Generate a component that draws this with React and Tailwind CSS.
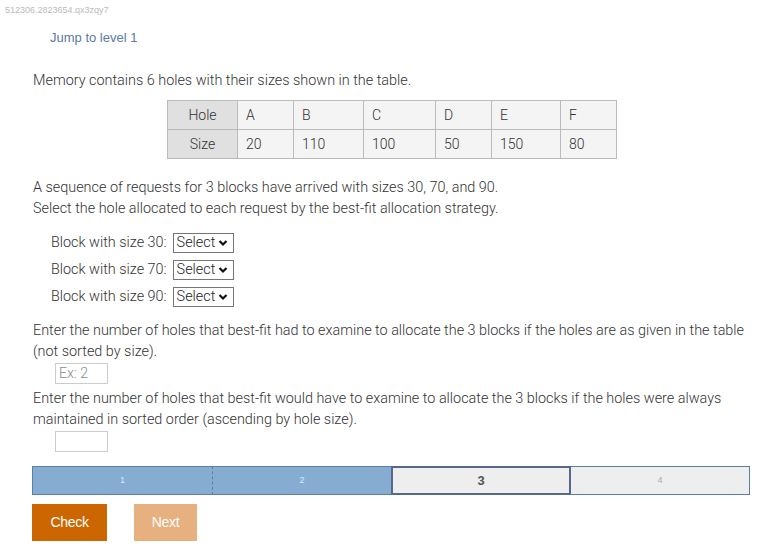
export default function App() {
  const holes = [
    ["A", "20", "w-[56px]"],
    ["B", "110", "w-[70px]"],
    ["C", "100", "w-[72px]"],
    ["D", "50", "w-[56px]"],
    ["E", "150", "w-[69px]"],
    ["F", "80", "w-[56px]"],
  ];

  return (
    <div className="relative w-[775px] h-[553px] bg-white text-[#333] font-['Roboto',sans-serif] font-light text-[14.4px] leading-[21px]">
      <div className="pt-[4px] pl-[5px] text-[9px] leading-[12px] text-[#bbb] font-normal font-['Liberation_Sans',sans-serif]">
        512306.2823654.qx3zqy7
      </div>

      <div className="pl-[50px] pt-[14px] text-[13px] leading-[16px] text-[#5a7aa8] font-normal font-['Liberation_Sans',sans-serif]">
        Jump to level 1
      </div>

      <div className="pl-[33px] pr-[25px]">
        <p className="mt-[24px]">Memory contains 6 holes with their sizes shown in the table.</p>

        {/* Holes table */}
        <table className="ml-[134px] mt-[9px] border-collapse text-[14px]">
          <tbody>
            <tr className="h-[29px]">
              <td className="w-[70px] border border-[#bbb] bg-[#e0e0e0] text-center">Hole</td>
              {holes.map(([h, , w]) => (
                <td key={h} className={`${w} border border-[#bbb] bg-[#f4f4f4] pl-[8px]`}>{h}</td>
              ))}
            </tr>
            <tr className="h-[29px]">
              <td className="border border-[#bbb] bg-[#e0e0e0] text-center">Size</td>
              {holes.map(([h, s]) => (
                <td key={h} className="border border-[#bbb] bg-[#f4f4f4] pl-[8px]">{s}</td>
              ))}
            </tr>
          </tbody>
        </table>

        <p className="mt-[18px]">
          A sequence of requests for 3 blocks have arrived with sizes 30, 70, and 90.
          <br />
          Select the hole allocated to each request by the best-fit allocation strategy.
        </p>

        <div className="mt-[13px] pl-[18px] flex flex-col gap-[6px]">
          {["30", "70", "90"].map((s) => (
            <div key={s} className="flex items-center h-[21px]">
              <span>Block with size {s}:</span>
              <div className="ml-[6px] h-[20px] w-[61px] border border-[#767676] flex items-center pl-[3px] text-[#222] text-[14.4px]">
                <span>Select</span>
                <svg className="ml-[3px]" width="10" height="8" viewBox="0 0 10 8">
                  <path d="M1.5 2 L5 5.5 L8.5 2" fill="none" stroke="#111" strokeWidth="2.2" />
                </svg>
              </div>
            </div>
          ))}
        </div>

        <p className="mt-[13px]">
          Enter the number of holes that best-fit had to examine to allocate the 3 blocks if the holes are as given in the table (not sorted by size).
        </p>
        <div className="ml-[22px] mt-[1px] h-[21px] w-[53px] border border-[#ccc] pl-[3px] text-[#888] text-[14px] leading-[19px]">
          Ex: 2
        </div>
        <p className="mt-[4px]">
          Enter the number of holes that best-fit would have to examine to allocate the 3 blocks if the holes were always maintained in sorted order (ascending by hole size).
        </p>
        <div className="ml-[22px] mt-[1px] h-[21px] w-[53px] border border-[#ccc]"></div>
      </div>

      {/* Progress levels */}
      <div className="ml-[32px] mt-[14px] w-[718px] h-[29px] flex font-normal">
        <div className="w-[180px] bg-[#87acd2] border border-r-0 border-[#5b7fa8] flex items-center justify-center text-[9px] text-[#dde8f4] font-['Liberation_Sans',sans-serif]">1</div>
        <div className="w-[179px] bg-[#87acd2] border border-[#5b7fa8] border-r-0 flex items-center justify-center text-[9px] text-[#dde8f4] font-['Liberation_Sans',sans-serif] [border-left-style:dashed]">2</div>
        <div className="w-[180px] bg-[#eeeeee] border-2 border-[#56698b] flex items-center justify-center text-[13px] font-bold text-[#555] font-['Liberation_Sans',sans-serif]">3</div>
        <div className="flex-1 bg-[#eeeeee] border border-l-0 border-[#5b7fa8] flex items-center justify-center text-[9px] text-[#aaa] font-['Liberation_Sans',sans-serif]">4</div>
      </div>

      <div className="ml-[32px] mt-[9px] flex gap-[27px] font-normal font-['Liberation_Sans',sans-serif] text-[14px] text-white tracking-[-0.3px]">
        <button className="w-[75px] h-[37px] bg-[#cc6600]">Check</button>
        <button className="w-[63px] h-[37px] bg-[#e6b07f]">Next</button>
      </div>
    </div>
  );
}
